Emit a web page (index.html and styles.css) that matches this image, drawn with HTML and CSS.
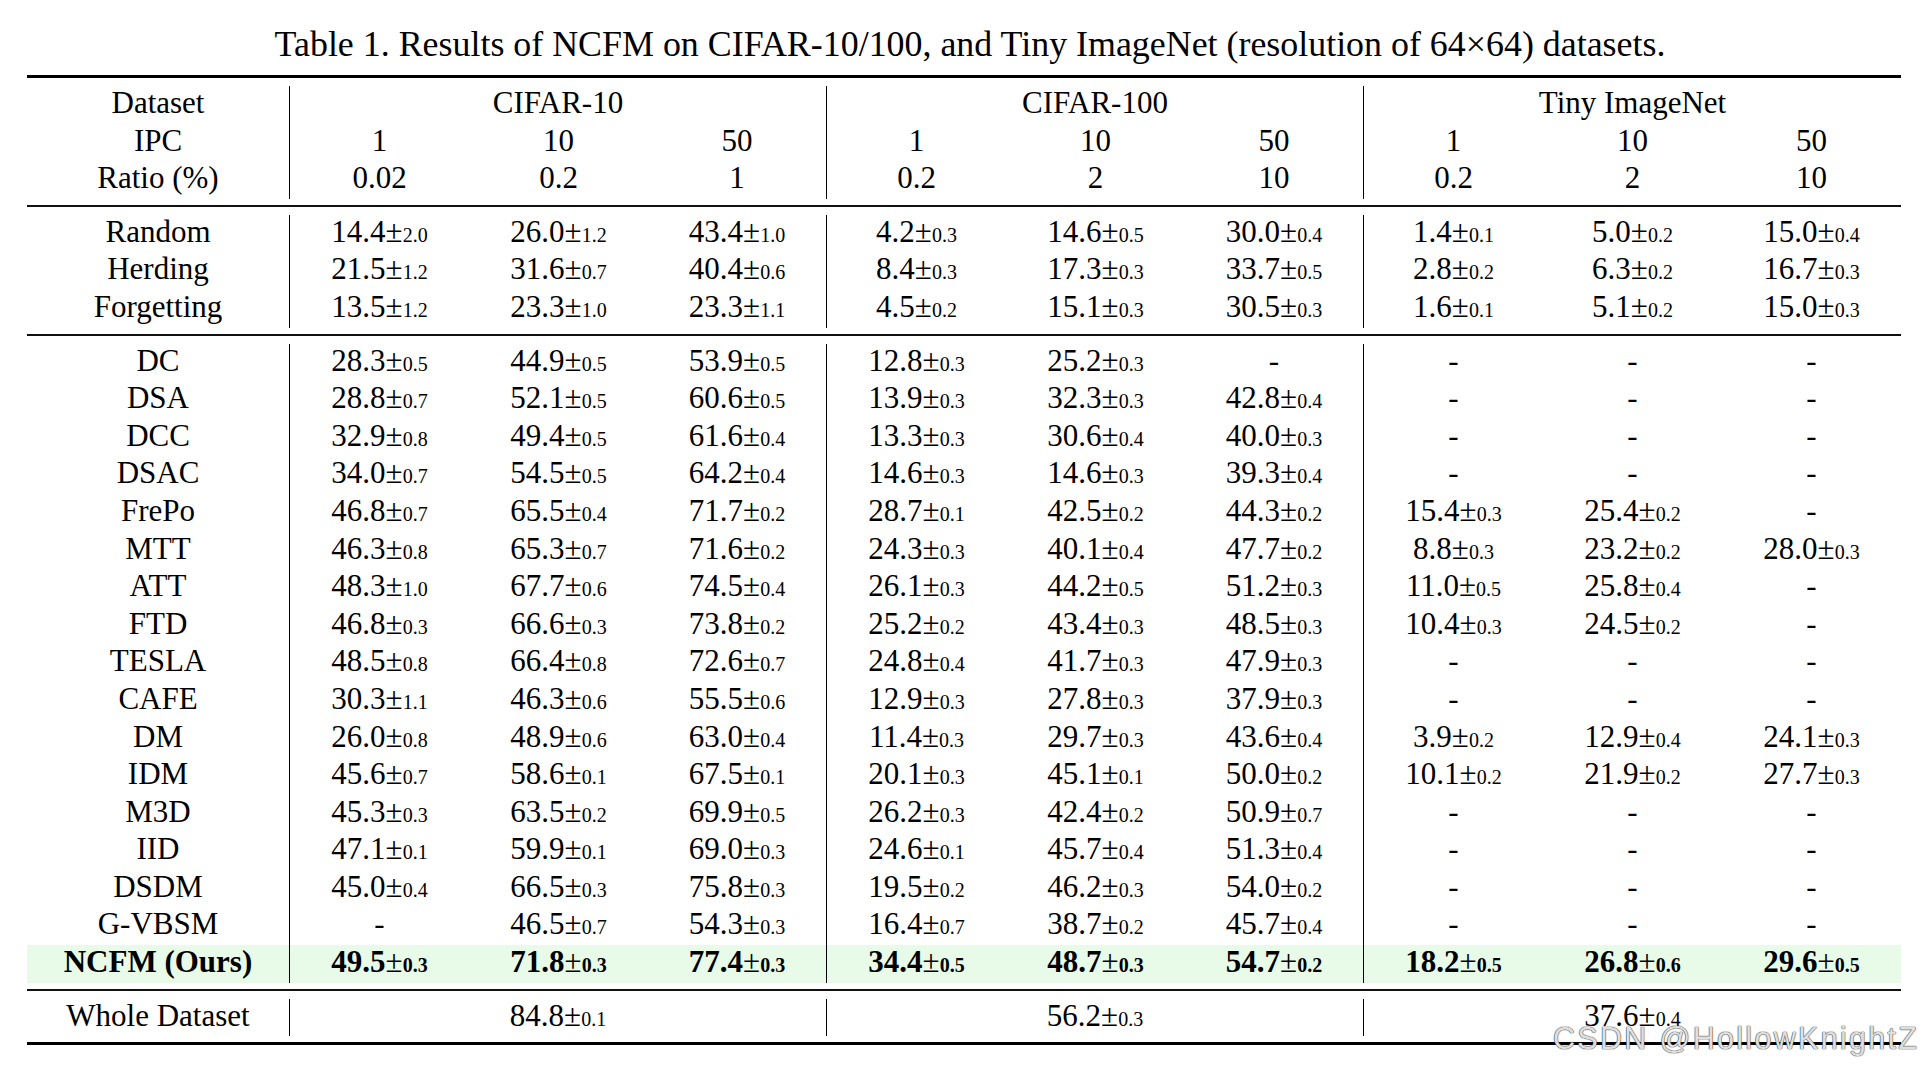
FILE: index.html
```html
<!DOCTYPE html>
<html>
<head>
<meta charset="utf-8">
<link rel="stylesheet" href="styles.css">
</head>
<body>
<div class="page">
  <div class="caption">Table 1. Results of NCFM on CIFAR-10/100, and Tiny ImageNet (resolution of 64×64) datasets.</div>
  <div class="table">
    <div class="rule heavy first"></div>
    <div class="row"><div class="n">Dataset</div><div class="span e">CIFAR-10</div><div class="span e">CIFAR-100</div><div class="span">Tiny ImageNet</div></div>
    <div class="row"><div class="n">IPC</div><div>1</div><div>10</div><div class="e">50</div><div>1</div><div>10</div><div class="e">50</div><div>1</div><div>10</div><div>50</div></div>
    <div class="row"><div class="n">Ratio (%)</div><div>0.02</div><div>0.2</div><div class="e">1</div><div>0.2</div><div>2</div><div class="e">10</div><div>0.2</div><div>2</div><div>10</div></div>
    <div class="rule"></div>
    <div class="row"><div class="n">Random</div><div>14.4<span class="pm">±</span><span class="s">2.0</span></div><div>26.0<span class="pm">±</span><span class="s">1.2</span></div><div class="e">43.4<span class="pm">±</span><span class="s">1.0</span></div><div>4.2<span class="pm">±</span><span class="s">0.3</span></div><div>14.6<span class="pm">±</span><span class="s">0.5</span></div><div class="e">30.0<span class="pm">±</span><span class="s">0.4</span></div><div>1.4<span class="pm">±</span><span class="s">0.1</span></div><div>5.0<span class="pm">±</span><span class="s">0.2</span></div><div>15.0<span class="pm">±</span><span class="s">0.4</span></div></div>
    <div class="row"><div class="n">Herding</div><div>21.5<span class="pm">±</span><span class="s">1.2</span></div><div>31.6<span class="pm">±</span><span class="s">0.7</span></div><div class="e">40.4<span class="pm">±</span><span class="s">0.6</span></div><div>8.4<span class="pm">±</span><span class="s">0.3</span></div><div>17.3<span class="pm">±</span><span class="s">0.3</span></div><div class="e">33.7<span class="pm">±</span><span class="s">0.5</span></div><div>2.8<span class="pm">±</span><span class="s">0.2</span></div><div>6.3<span class="pm">±</span><span class="s">0.2</span></div><div>16.7<span class="pm">±</span><span class="s">0.3</span></div></div>
    <div class="row"><div class="n">Forgetting</div><div>13.5<span class="pm">±</span><span class="s">1.2</span></div><div>23.3<span class="pm">±</span><span class="s">1.0</span></div><div class="e">23.3<span class="pm">±</span><span class="s">1.1</span></div><div>4.5<span class="pm">±</span><span class="s">0.2</span></div><div>15.1<span class="pm">±</span><span class="s">0.3</span></div><div class="e">30.5<span class="pm">±</span><span class="s">0.3</span></div><div>1.6<span class="pm">±</span><span class="s">0.1</span></div><div>5.1<span class="pm">±</span><span class="s">0.2</span></div><div>15.0<span class="pm">±</span><span class="s">0.3</span></div></div>
    <div class="rule"></div>
    <div class="row"><div class="n">DC</div><div>28.3<span class="pm">±</span><span class="s">0.5</span></div><div>44.9<span class="pm">±</span><span class="s">0.5</span></div><div class="e">53.9<span class="pm">±</span><span class="s">0.5</span></div><div>12.8<span class="pm">±</span><span class="s">0.3</span></div><div>25.2<span class="pm">±</span><span class="s">0.3</span></div><div class="e">-</div><div>-</div><div>-</div><div>-</div></div>
    <div class="row"><div class="n">DSA</div><div>28.8<span class="pm">±</span><span class="s">0.7</span></div><div>52.1<span class="pm">±</span><span class="s">0.5</span></div><div class="e">60.6<span class="pm">±</span><span class="s">0.5</span></div><div>13.9<span class="pm">±</span><span class="s">0.3</span></div><div>32.3<span class="pm">±</span><span class="s">0.3</span></div><div class="e">42.8<span class="pm">±</span><span class="s">0.4</span></div><div>-</div><div>-</div><div>-</div></div>
    <div class="row"><div class="n">DCC</div><div>32.9<span class="pm">±</span><span class="s">0.8</span></div><div>49.4<span class="pm">±</span><span class="s">0.5</span></div><div class="e">61.6<span class="pm">±</span><span class="s">0.4</span></div><div>13.3<span class="pm">±</span><span class="s">0.3</span></div><div>30.6<span class="pm">±</span><span class="s">0.4</span></div><div class="e">40.0<span class="pm">±</span><span class="s">0.3</span></div><div>-</div><div>-</div><div>-</div></div>
    <div class="row"><div class="n">DSAC</div><div>34.0<span class="pm">±</span><span class="s">0.7</span></div><div>54.5<span class="pm">±</span><span class="s">0.5</span></div><div class="e">64.2<span class="pm">±</span><span class="s">0.4</span></div><div>14.6<span class="pm">±</span><span class="s">0.3</span></div><div>14.6<span class="pm">±</span><span class="s">0.3</span></div><div class="e">39.3<span class="pm">±</span><span class="s">0.4</span></div><div>-</div><div>-</div><div>-</div></div>
    <div class="row"><div class="n">FrePo</div><div>46.8<span class="pm">±</span><span class="s">0.7</span></div><div>65.5<span class="pm">±</span><span class="s">0.4</span></div><div class="e">71.7<span class="pm">±</span><span class="s">0.2</span></div><div>28.7<span class="pm">±</span><span class="s">0.1</span></div><div>42.5<span class="pm">±</span><span class="s">0.2</span></div><div class="e">44.3<span class="pm">±</span><span class="s">0.2</span></div><div>15.4<span class="pm">±</span><span class="s">0.3</span></div><div>25.4<span class="pm">±</span><span class="s">0.2</span></div><div>-</div></div>
    <div class="row"><div class="n">MTT</div><div>46.3<span class="pm">±</span><span class="s">0.8</span></div><div>65.3<span class="pm">±</span><span class="s">0.7</span></div><div class="e">71.6<span class="pm">±</span><span class="s">0.2</span></div><div>24.3<span class="pm">±</span><span class="s">0.3</span></div><div>40.1<span class="pm">±</span><span class="s">0.4</span></div><div class="e">47.7<span class="pm">±</span><span class="s">0.2</span></div><div>8.8<span class="pm">±</span><span class="s">0.3</span></div><div>23.2<span class="pm">±</span><span class="s">0.2</span></div><div>28.0<span class="pm">±</span><span class="s">0.3</span></div></div>
    <div class="row"><div class="n">ATT</div><div>48.3<span class="pm">±</span><span class="s">1.0</span></div><div>67.7<span class="pm">±</span><span class="s">0.6</span></div><div class="e">74.5<span class="pm">±</span><span class="s">0.4</span></div><div>26.1<span class="pm">±</span><span class="s">0.3</span></div><div>44.2<span class="pm">±</span><span class="s">0.5</span></div><div class="e">51.2<span class="pm">±</span><span class="s">0.3</span></div><div>11.0<span class="pm">±</span><span class="s">0.5</span></div><div>25.8<span class="pm">±</span><span class="s">0.4</span></div><div>-</div></div>
    <div class="row"><div class="n">FTD</div><div>46.8<span class="pm">±</span><span class="s">0.3</span></div><div>66.6<span class="pm">±</span><span class="s">0.3</span></div><div class="e">73.8<span class="pm">±</span><span class="s">0.2</span></div><div>25.2<span class="pm">±</span><span class="s">0.2</span></div><div>43.4<span class="pm">±</span><span class="s">0.3</span></div><div class="e">48.5<span class="pm">±</span><span class="s">0.3</span></div><div>10.4<span class="pm">±</span><span class="s">0.3</span></div><div>24.5<span class="pm">±</span><span class="s">0.2</span></div><div>-</div></div>
    <div class="row"><div class="n">TESLA</div><div>48.5<span class="pm">±</span><span class="s">0.8</span></div><div>66.4<span class="pm">±</span><span class="s">0.8</span></div><div class="e">72.6<span class="pm">±</span><span class="s">0.7</span></div><div>24.8<span class="pm">±</span><span class="s">0.4</span></div><div>41.7<span class="pm">±</span><span class="s">0.3</span></div><div class="e">47.9<span class="pm">±</span><span class="s">0.3</span></div><div>-</div><div>-</div><div>-</div></div>
    <div class="row"><div class="n">CAFE</div><div>30.3<span class="pm">±</span><span class="s">1.1</span></div><div>46.3<span class="pm">±</span><span class="s">0.6</span></div><div class="e">55.5<span class="pm">±</span><span class="s">0.6</span></div><div>12.9<span class="pm">±</span><span class="s">0.3</span></div><div>27.8<span class="pm">±</span><span class="s">0.3</span></div><div class="e">37.9<span class="pm">±</span><span class="s">0.3</span></div><div>-</div><div>-</div><div>-</div></div>
    <div class="row"><div class="n">DM</div><div>26.0<span class="pm">±</span><span class="s">0.8</span></div><div>48.9<span class="pm">±</span><span class="s">0.6</span></div><div class="e">63.0<span class="pm">±</span><span class="s">0.4</span></div><div>11.4<span class="pm">±</span><span class="s">0.3</span></div><div>29.7<span class="pm">±</span><span class="s">0.3</span></div><div class="e">43.6<span class="pm">±</span><span class="s">0.4</span></div><div>3.9<span class="pm">±</span><span class="s">0.2</span></div><div>12.9<span class="pm">±</span><span class="s">0.4</span></div><div>24.1<span class="pm">±</span><span class="s">0.3</span></div></div>
    <div class="row"><div class="n">IDM</div><div>45.6<span class="pm">±</span><span class="s">0.7</span></div><div>58.6<span class="pm">±</span><span class="s">0.1</span></div><div class="e">67.5<span class="pm">±</span><span class="s">0.1</span></div><div>20.1<span class="pm">±</span><span class="s">0.3</span></div><div>45.1<span class="pm">±</span><span class="s">0.1</span></div><div class="e">50.0<span class="pm">±</span><span class="s">0.2</span></div><div>10.1<span class="pm">±</span><span class="s">0.2</span></div><div>21.9<span class="pm">±</span><span class="s">0.2</span></div><div>27.7<span class="pm">±</span><span class="s">0.3</span></div></div>
    <div class="row"><div class="n">M3D</div><div>45.3<span class="pm">±</span><span class="s">0.3</span></div><div>63.5<span class="pm">±</span><span class="s">0.2</span></div><div class="e">69.9<span class="pm">±</span><span class="s">0.5</span></div><div>26.2<span class="pm">±</span><span class="s">0.3</span></div><div>42.4<span class="pm">±</span><span class="s">0.2</span></div><div class="e">50.9<span class="pm">±</span><span class="s">0.7</span></div><div>-</div><div>-</div><div>-</div></div>
    <div class="row"><div class="n">IID</div><div>47.1<span class="pm">±</span><span class="s">0.1</span></div><div>59.9<span class="pm">±</span><span class="s">0.1</span></div><div class="e">69.0<span class="pm">±</span><span class="s">0.3</span></div><div>24.6<span class="pm">±</span><span class="s">0.1</span></div><div>45.7<span class="pm">±</span><span class="s">0.4</span></div><div class="e">51.3<span class="pm">±</span><span class="s">0.4</span></div><div>-</div><div>-</div><div>-</div></div>
    <div class="row"><div class="n">DSDM</div><div>45.0<span class="pm">±</span><span class="s">0.4</span></div><div>66.5<span class="pm">±</span><span class="s">0.3</span></div><div class="e">75.8<span class="pm">±</span><span class="s">0.3</span></div><div>19.5<span class="pm">±</span><span class="s">0.2</span></div><div>46.2<span class="pm">±</span><span class="s">0.3</span></div><div class="e">54.0<span class="pm">±</span><span class="s">0.2</span></div><div>-</div><div>-</div><div>-</div></div>
    <div class="row"><div class="n">G-VBSM</div><div>-</div><div>46.5<span class="pm">±</span><span class="s">0.7</span></div><div class="e">54.3<span class="pm">±</span><span class="s">0.3</span></div><div>16.4<span class="pm">±</span><span class="s">0.7</span></div><div>38.7<span class="pm">±</span><span class="s">0.2</span></div><div class="e">45.7<span class="pm">±</span><span class="s">0.4</span></div><div>-</div><div>-</div><div>-</div></div>
    <div class="row hl"><div class="n b">NCFM (Ours)</div><div><b>49.5</b><span class="pm">±</span><span class="s b">0.3</span></div><div><b>71.8</b><span class="pm">±</span><span class="s b">0.3</span></div><div class="e"><b>77.4</b><span class="pm">±</span><span class="s b">0.3</span></div><div><b>34.4</b><span class="pm">±</span><span class="s b">0.5</span></div><div><b>48.7</b><span class="pm">±</span><span class="s b">0.3</span></div><div class="e"><b>54.7</b><span class="pm">±</span><span class="s b">0.2</span></div><div><b>18.2</b><span class="pm">±</span><span class="s b">0.5</span></div><div><b>26.8</b><span class="pm">±</span><span class="s b">0.6</span></div><div><b>29.6</b><span class="pm">±</span><span class="s b">0.5</span></div></div>
    <div class="rule"></div>
    <div class="row"><div class="n">Whole Dataset</div><div class="span e">84.8<span class="pm">±</span><span class="s">0.1</span></div><div class="span e">56.2<span class="pm">±</span><span class="s">0.3</span></div><div class="span">37.6<span class="pm">±</span><span class="s">0.4</span></div></div>
    <div class="rule heavy last"></div>
  </div>
  <div class="watermark">CSDN @HollowKnightZ</div>
</div>
</body>
</html>
```

FILE: styles.css
```css
html, body {
  margin: 0;
  padding: 0;
  background: #ffffff;
}

body {
  font-family: "Liberation Serif", "Times New Roman", serif;
  color: #000000;
}

.page {
  position: relative;
  width: 1924px;
  height: 1069px;
  padding-top: 24px;
  box-sizing: border-box;
  overflow: hidden;
}

.caption {
  margin: 0 0 11px 27px;
  width: 1874px;
  padding-left: 12px;
  box-sizing: border-box;
  text-align: center;
  font-size: 35.9px;
  line-height: 40px;
  white-space: nowrap;
}

.table {
  margin-left: 27px;
  width: 1874px;
  font-size: 31px;
}

.rule {
  height: 2px;
  background: #111111;
  margin: 6px 0 8px;
}

.rule.heavy {
  height: 3px;
  background: #000000;
}

.rule.first {
  margin-top: 0;
}

.rule.last {
  margin-bottom: 0;
}

.row {
  display: grid;
  grid-template-columns: 263px repeat(9, 179px);
  height: 37.6px;
  line-height: 34px;
  text-align: center;
  white-space: nowrap;
}

.row > div {
  box-sizing: border-box;
}

.row.hl {
  background: #e8fbe8;
}

.span {
  grid-column: span 3;
}

.n,
.e {
  border-right: 1px solid #000000;
}

.b,
.row b {
  font-weight: bold;
}

.pm {
  font-weight: normal;
}

.s {
  font-size: 20px;
  line-height: 1;
}

.watermark {
  position: absolute;
  left: 1553px;
  top: 1023px;
  font-family: "Liberation Sans", Arial, sans-serif;
  font-size: 30.5px;
  line-height: 30px;
  letter-spacing: 2.3px;
  white-space: nowrap;
  color: rgba(246, 246, 246, 0.9);
  text-shadow: 0 0 1px #444444, 0 0 1px #444444, 0 0 1px #666666;
}
```
